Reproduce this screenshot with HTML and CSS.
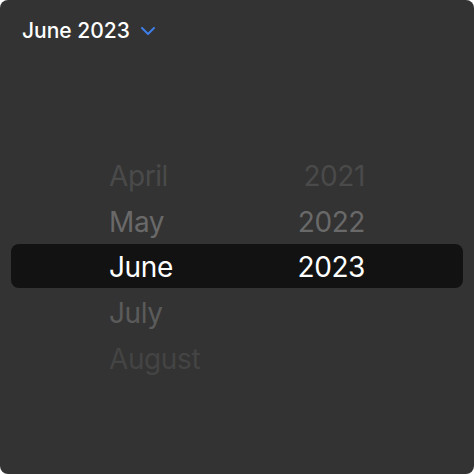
FILE: index.html
```html
<!DOCTYPE html>
<html lang="en">
<head>
    <meta charset="UTF-8">
    <meta name="viewport" content="width=device-width, initial-scale=1.0">
    <title>Month Picker</title>
    <link rel="stylesheet" href="styles.css">
</head>
<body>
    <div class="card">
        <div class="header">
            <span class="header-title">June 2023</span>
            <svg class="chevron" width="16" height="10" viewBox="0 0 16 10">
                <path d="M2 2 L8 8 L14 2" fill="none" stroke="#3f7ee8" stroke-width="2" stroke-linecap="round" stroke-linejoin="round"/>
            </svg>
        </div>

        <!-- Wheel picker -->
        <div class="picker">
            <div class="row far"><span>April</span><span>2021</span></div>
            <div class="row near"><span>May</span><span>2022</span></div>
            <div class="row selected"><span>June</span><span>2023</span></div>
            <div class="row below"><span>July</span><span></span></div>
            <div class="row farthest"><span>August</span><span></span></div>
        </div>
    </div>
</body>
</html>
```

FILE: styles.css
```css
body {
    margin: 0;
    background-color: #ffffff;
    font-family: 'Inter', 'Liberation Sans', sans-serif;
}

.card {
    width: 474px;
    height: 474px;
    background-color: #333333;
    border-radius: 8px;
    overflow: hidden;
}

.header {
    display: flex;
    align-items: center;
    gap: 10px;
    padding: 18px 22px 0;
    height: 24px;
}

.header-title {
    font-size: 21px;
    font-weight: 500;
    color: #ffffff;
    letter-spacing: 0;
}

.chevron {
    margin-top: 1px;
}

.picker {
    margin-top: 110px;
}

.row {
    box-sizing: border-box;
    display: flex;
    justify-content: space-between;
    align-items: center;
    height: 46px;
    margin: 0 11px;
    padding: 2px 98px 0;
    font-size: 28px;
    letter-spacing: -0.4px;
}

.row.far {
    color: #4a4a4a;
}

.row.near {
    color: #696969;
}

.row.selected {
    height: 44px;
    margin: 0 11px 1px;
    background-color: #121212;
    border-radius: 8px;
    color: #ffffff;
}

.row.below {
    color: #5b5b5b;
}

.row.farthest {
    color: #444444;
}
```
